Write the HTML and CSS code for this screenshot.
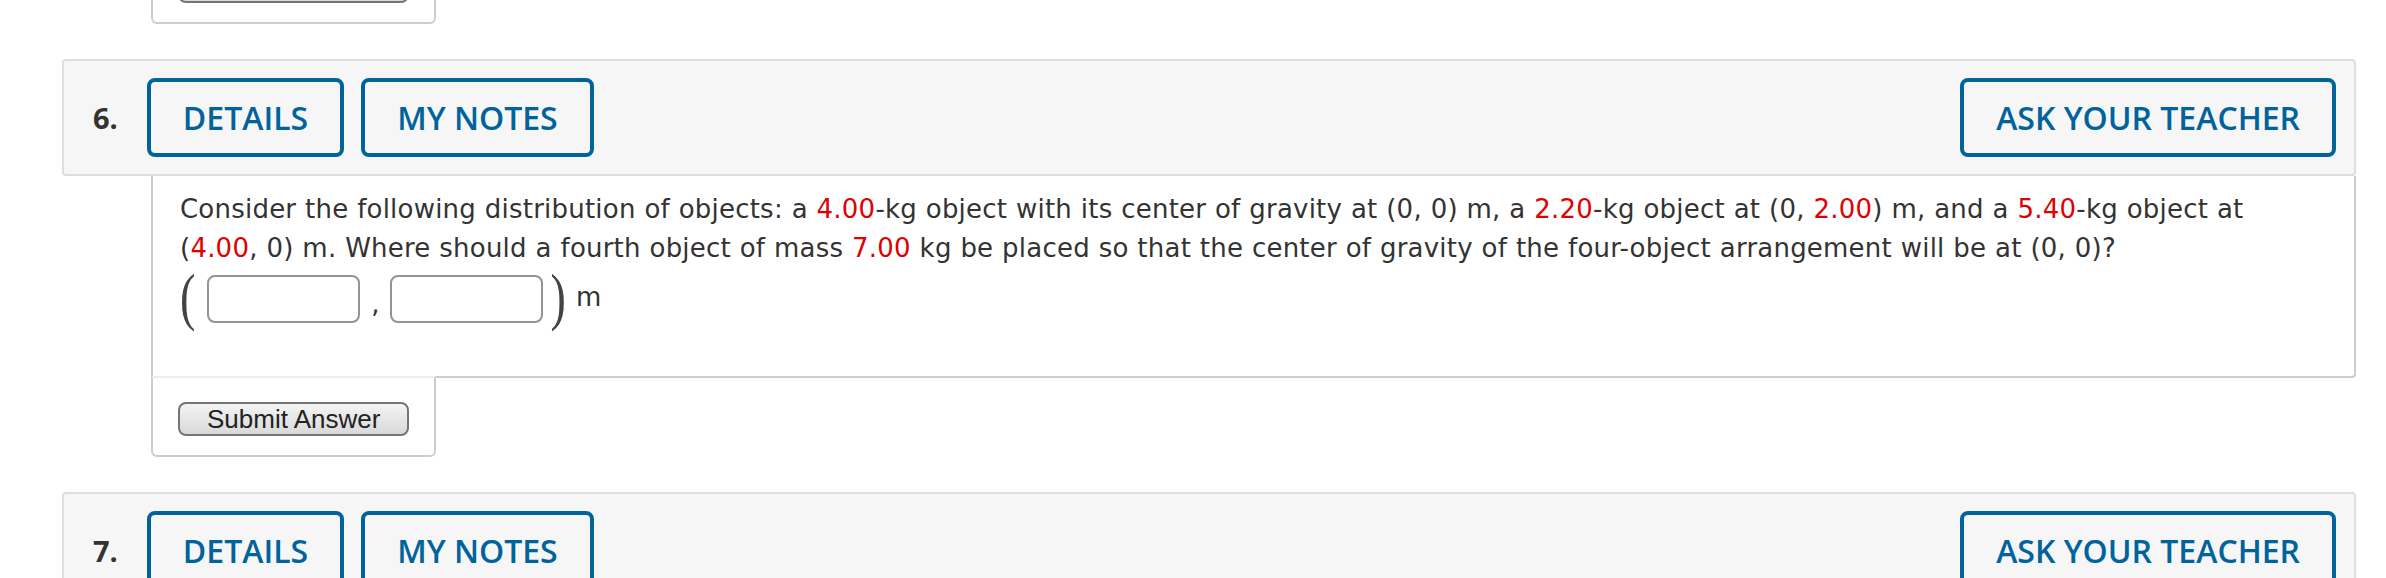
FILE: index.html
```html
<!DOCTYPE html>
<html lang="en">
<head>
  <meta charset="UTF-8" />
  <title>Assignment</title>
  <link rel="stylesheet" href="styles.css">
</head>
<body>

  <div class="page">

    <!-- tail of question 5 -->
    <div class="submit-tab first">
      <button class="submit-btn">Submit Answer</button>
    </div>

    <div class="question">
      <div class="qhead">
        <span class="qnum">6.</span>
        <button class="tab-btn">DETAILS</button>
        <button class="tab-btn">MY NOTES</button>
        <button class="tab-btn ask">ASK YOUR TEACHER</button>
      </div>

      <div class="qbody">
        <p class="prompt">
          Consider the following distribution of objects: a <span class="red">4.00</span>-kg object with its center of gravity at (0, 0) m, a <span class="red">2.20</span>-kg object at (0, <span class="red">2.00</span>) m, and a <span class="red">5.40</span>-kg object at
          (<span class="red">4.00</span>, 0) m. Where should a fourth object of mass <span class="red">7.00</span> kg be placed so that the center of gravity of the four-object arrangement will be at (0, 0)?
        </p>
        <div class="answer-row">
          <span class="paren open">(</span>
          <input class="answer" type="text">
          <span class="comma">,</span>
          <input class="answer" type="text">
          <span class="paren">)</span>
          <span class="unit">m</span>
        </div>
      </div>

      <div class="submit-tab">
        <button class="submit-btn">Submit Answer</button>
      </div>
    </div>

    <div class="question">
      <div class="qhead">
        <span class="qnum">7.</span>
        <button class="tab-btn">DETAILS</button>
        <button class="tab-btn">MY NOTES</button>
        <button class="tab-btn ask">ASK YOUR TEACHER</button>
      </div>
    </div>

  </div>

</body>
</html>
```

FILE: styles.css
```css
* {
  box-sizing: border-box;
}

body {
  margin: 0;
  padding: 0;
  background: #fff;
  color: #333;
  font-family: "DejaVu Sans", Verdana, sans-serif;
}

.page {
  padding: 0 30px 0 62px;
}

.question {
  margin-top: 35px;
}

/* header bar with the number and the tab buttons */
.qhead {
  display: flex;
  align-items: center;
  background: #f6f6f6;
  border: 2px solid #dedede;
  border-radius: 4px;
  padding: 17px 18px 17px 29px;
}

.qnum {
  font-family: "Open Sans", sans-serif;
  font-weight: 700;
  font-size: 29px;
  color: #333;
  margin-right: 29px;
}

.tab-btn {
  height: 79px;
  padding: 0 32px;
  margin-right: 17px;
  border: 4px solid #00639b;
  border-radius: 8px;
  background: transparent;
  color: #00639b;
  font-family: "Open Sans", sans-serif;
  font-weight: 600;
  font-size: 32px;
  cursor: pointer;
}

.tab-btn.ask {
  margin-left: auto;
  margin-right: 0;
}

/* question text */
.qbody {
  margin-left: 89px;
  border: 2px solid #cdcdcd;
  border-top: none;
  border-radius: 0 0 4px 0;
  padding: 14px 44px 46px 27px;
}

.prompt {
  margin: 0;
  font-size: 26px;
  line-height: 39px;
  letter-spacing: 0.22px;
  word-spacing: 0.3px;
}

.red {
  color: #e00000;
}

.answer-row {
  display: flex;
  align-items: center;
  height: 62px;
}

.paren {
  font-family: "Liberation Serif", serif;
  font-size: 46px;
  line-height: 46px;
  color: #444;
  transform: scaleY(1.38);
  margin-top: -4px;
}

.paren.open {
  margin-right: 4px;
}

.answer {
  width: 153px;
  height: 48px;
  border: 2px solid #939393;
  border-radius: 8px;
  background: #fff;
  margin: 0 8px;
}

.comma {
  font-size: 26px;
  margin: 10px 2px 0 3px;
}

.unit {
  font-size: 26px;
  margin-left: 10px;
  margin-top: -4px;
}

/* submit tab hanging under the body */
.submit-tab {
  width: 285px;
  margin-left: 89px;
  margin-top: -2px;
  border: 2px solid #cdcdcd;
  border-top-color: #ededed;
  border-radius: 0 0 6px 6px;
  padding: 24px 0 19px 25px;
}

.submit-tab.first {
  margin-top: -57px;
}

.submit-btn {
  height: 34px;
  padding: 0 27px;
  border: 2px solid #757575;
  border-radius: 8px;
  background: linear-gradient(#f4f4f4, #d9d9d9);
  color: #222;
  font-family: "Liberation Sans", Arial, sans-serif;
  font-size: 26px;
  line-height: 28px;
  cursor: pointer;
}
```
